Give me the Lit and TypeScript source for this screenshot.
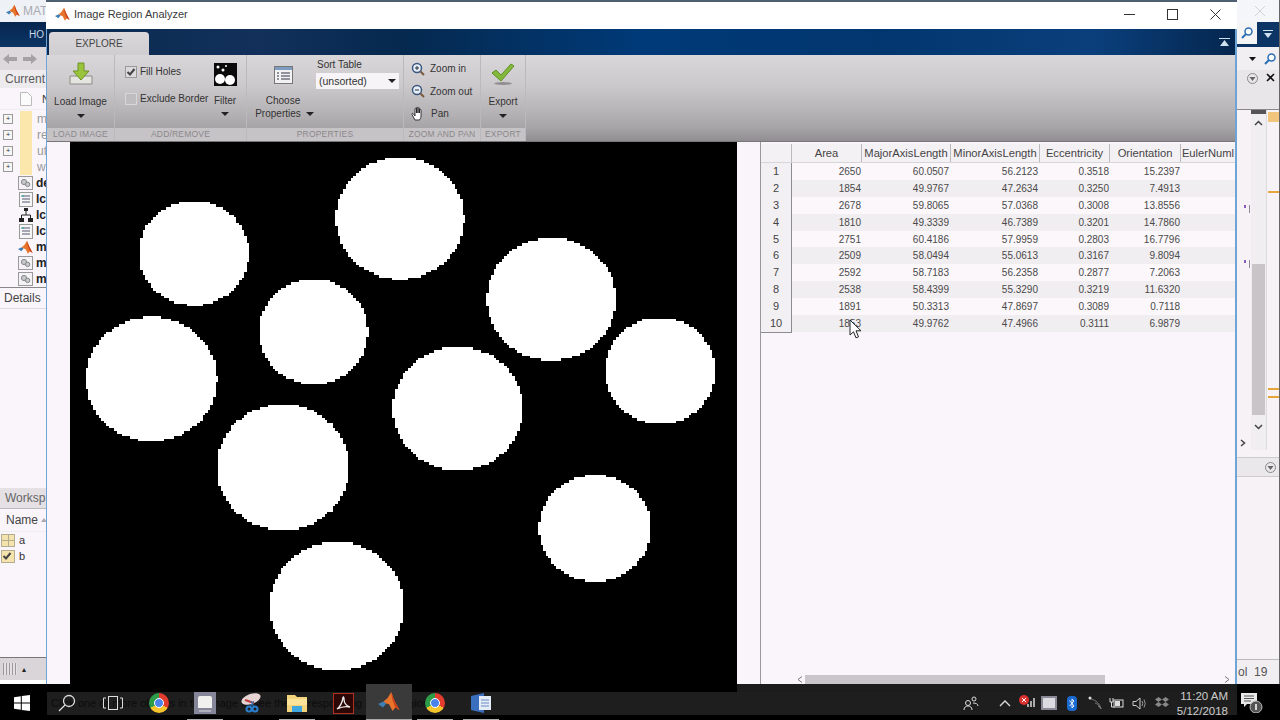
import { LitElement, html, css, svg } from "lit";
import { customElement } from "lit/decorators.js";

// x, y, rx, ry of the white regions in the binary image (relative to the image panel)
const blobs = [
  [124, 111, 55, 52],
  [330, 76, 64, 61],
  [481.5, 157, 64.5, 61],
  [243.5, 189.5, 54.5, 52.5],
  [81.5, 237, 65.5, 62],
  [590, 228.5, 55, 53],
  [388, 266.5, 65, 61.5],
  [213, 325, 66, 63],
  [525, 386, 56, 53],
  [267, 464, 67, 64],
];

// the source image is upscaled, so the edges show coarse pixels
const GRID = 2.6;
const blobPath = ([cx, cy, rx, ry]: number[]) => {
  let d = "";
  for (let j = Math.floor((cy - ry) / GRID); j * GRID < cy + ry; j++) {
    const t = (j * GRID + GRID / 2 - cy) / ry;
    if (Math.abs(t) >= 1) continue;
    const half = rx * Math.sqrt(1 - t * t);
    const x0 = (Math.round((cx - half) / GRID) * GRID).toFixed(1);
    const x1 = (Math.round((cx + half) / GRID) * GRID).toFixed(1);
    const y0 = (j * GRID).toFixed(1);
    const y1 = ((j + 1) * GRID + 0.4).toFixed(1);
    d += `M${x0} ${y0}H${x1}V${y1}H${x0}z`;
  }
  return d;
};

const rows = [
  ["2650", "60.0507", "56.2123", "0.3518", "15.2397"],
  ["1854", "49.9767", "47.2634", "0.3250", "7.4913"],
  ["2678", "59.8065", "57.0368", "0.3008", "13.8556"],
  ["1810", "49.3339", "46.7389", "0.3201", "14.7860"],
  ["2751", "60.4186", "57.9959", "0.2803", "16.7796"],
  ["2509", "58.0494", "55.0613", "0.3167", "9.8094"],
  ["2592", "58.7183", "56.2358", "0.2877", "7.2063"],
  ["2538", "58.4399", "55.3290", "0.3219", "11.6320"],
  ["1891", "50.3313", "47.8697", "0.3089", "0.7118"],
  ["1853", "49.9762", "47.4966", "0.3111", "6.9879"],
];

const headers = ["Area", "MajorAxisLength", "MinorAxisLength", "Eccentricity", "Orientation", "EulerNuml"];

const matlabLogo = (size: number) => html`<svg width=${size} height=${size} viewBox="0 0 16 16">
  <path d="M0 9.5 4 7.6 6 9 3.6 12z" fill="#3f7fb5" />
  <path d="M4 7.6 7 5 9.6.8 12 7l3.6 6.8-3-1.8-2 2.6L8 9.6 6 9z" fill="#e8732a" />
  <path d="M9.6.8 12 7l3.6 6.8-3-1.8L10.4 6z" fill="#c9401c" />
</svg>`;

const checkMark = html`<svg width="10" height="10" viewBox="0 0 10 10"><path d="M1.5 5 4 7.5 8.5 2" fill="none" stroke="#444" stroke-width="2" /></svg>`;

const caret = html`<svg class="caret" width="8" height="4" viewBox="0 0 8 4"><path d="M0 0h8L4 4z" fill="#222" /></svg>`;

const gearFile = html`<svg width="15" height="14" viewBox="0 0 15 14"><rect x=".5" y=".5" width="14" height="13" fill="#f4f2f4" stroke="#999" /><circle cx="6" cy="6" r="2.6" fill="#c4c8cc" stroke="#888" /><circle cx="9.6" cy="8.4" r="2.2" fill="#c4c8cc" stroke="#888" /></svg>`;
const docFile = html`<svg width="14" height="15" viewBox="0 0 14 15"><rect x=".5" y=".5" width="13" height="14" fill="#f6f6f6" stroke="#999" /><path d="M3 4h8M3 7h8M3 10h8" stroke="#557" /><path d="M2 4h3" stroke="#3a9" /></svg>`;
const treeFile = html`<svg width="14" height="15" viewBox="0 0 14 15"><path d="M7 2v5M2.500 11V7h9v4" stroke="#222" fill="none" /><rect x="5" y="0" width="4" height="3" fill="#222" /><rect x="0" y="10" width="5" height="4" fill="#222" /><rect x="9" y="10" width="5" height="4" fill="#222" /></svg>`;

const chrome = html`<span class="chrome"><span class="chrome-eye"></span></span>`;

@customElement("app-root")
export class AppRoot extends LitElement {
  static styles = css`
    :host {
      display: block;
      width: 1280px;
      height: 720px;
      overflow: hidden;
      position: relative;
      font-family: "Liberation Sans", Arial, sans-serif;
      color: #3a3a3a;
      background: #000;
    }
    svg { display: block; flex: none; }
    .desk { display: flex; height: 684px; }

    /* MATLAB behind, left */
    .back-left {
      width: 46px;
      display: flex;
      flex-direction: column;
      background: #faf5fb;
      flex: none;
      overflow: hidden;
    }
    .bl-title { height: 22px; display: flex; align-items: center; gap: 3px; padding-left: 6px; background: #eef1f6; color: #a9a9b2; font-size: 12px; }
    .bl-home { height: 25px; background: linear-gradient(#06264e, #0c3565); color: #c9d6e6; font-size: 10px; display: flex; align-items: center; padding-left: 29px; box-sizing: border-box; }
    .bl-nav { height: 23px; background: #dcd8dc; display: flex; align-items: center; gap: 6px; padding-left: 3px; }
    .bl-current { height: 18px; background: #eeebee; font-size: 12px; color: #5a5a5a; padding-left: 5px; line-height: 18px; }
    .bl-head { height: 22px; display: flex; align-items: center; padding-left: 20px; gap: 10px; font-size: 11px; border-bottom: 1px solid #eee; box-sizing: border-box; }
    .bl-list { padding-top: 1px; height: 178px; box-sizing: border-box; border-bottom: 1px solid #888; }
    .f-row { height: 16px; display: flex; align-items: center; font-size: 12px; color: #222; white-space: nowrap; }
    .f-row.dim { color: #999; }
    .f-row b { font-weight: 700; }
    .plus { width: 8px; height: 8px; margin-left: 3px; border: 1px solid #999; font-size: 8px; line-height: 7px; text-align: center; color: #444; flex: none; box-sizing: content-box; background: #f6f6f6; }
    .folder { width: 12px; height: 16px; background: #fbe6ac; margin: 0 5px 0 7px; flex: none; }
    .file-ic { width: 15px; margin: 0 3px 0 18px; flex: none; display: flex; justify-content: center; }
    .bl-details { height: 20px; font-size: 12px; padding-left: 4px; line-height: 20px; color: #444; }
    .bl-gap { height: 179px; border-top: 1px solid #ddd; }
    .bl-ws { height: 20px; background: #e4e0e4; border-bottom: 1px solid #bbb; font-size: 12px; color: #666; padding-left: 5px; line-height: 20px; }
    .bl-name { height: 22px; font-size: 12px; padding-left: 6px; line-height: 22px; color: #444; border-bottom: 1px solid #eee; display: flex; align-items: center; gap: 3px; }
    .bl-name i { width: 0; height: 0; border: 3px solid transparent; border-bottom: 4px solid #aaa; margin-top: -4px; }
    .w-row { height: 16px; display: flex; align-items: center; gap: 4px; font-size: 11px; color: #333; }
    .w-ic { width: 14px; height: 13px; background: #f4e3ad; border: 1px solid #b5ad90; box-sizing: border-box; margin-left: 1px; }
    .w-ic.grid { background: linear-gradient(#b5ad90, #b5ad90) 0 50% / 100% 1px no-repeat, linear-gradient(#b5ad90, #b5ad90) 50% 0 / 1px 100% no-repeat, #f4e3ad; }
    .bl-fill { flex: 1; }
    .bl-status { height: 22px; border-top: 1px solid #777; background: #d9d5d9; display: flex; align-items: center; font-size: 8px; color: #222; padding-left: 3px; gap: 5px; }
    .bl-bars { width: 14px; height: 12px; background: repeating-linear-gradient(90deg, #999 0 1px, #e4e0e4 1px 3px); }
    .bl-end { height: 4px; background: #fff; }

    /* analyzer window */
    .win {
      width: 1191px;
      flex: none;
      display: flex;
      flex-direction: column;
      box-sizing: border-box;
      border-left: 1px solid #6ea5d6;
      border-right: 2px solid #6ea5d6;
      background: #faf5fb;
    }
    .title { height: 29px; box-sizing: border-box; border-top: 2px solid #4d5f70; padding-bottom: 3px; margin: 0 -2px 0 -1px; background: #fff; display: flex; align-items: center; padding-left: 9px; gap: 4px; font-size: 11px; color: #3a3a3a; flex: none; }
    .title-fill { flex: 1; }
    .wc { width: 43px; display: flex; justify-content: center; margin-left: -4px; }
    .strip { height: 26px; background: linear-gradient(90deg, #0a2a4f, #12305a 18%, #05294f 30%, #003a78 50%, #02366f 70%, #0a3f7c 88%, #05274f); display: flex; justify-content: space-between; align-items: flex-end; padding-left: 2px; flex: none; }
    .tab { width: 100px; height: 23px; border-radius: 4px 4px 0 0; background: linear-gradient(#dbd8db, #d0cdd0); font-size: 10px; color: #444; text-align: center; line-height: 23px; }
    .collapse { align-self: center; margin-right: 5px; }
    .ribbon { height: 87px; display: flex; flex: none; background: linear-gradient(#dad7da 0%, #ccc9cc 35%, #b7b4b7 65%, #a7a4a7 85%, #908e90 100%); border-bottom: 1px solid #777; box-sizing: border-box; font-size: 10px; color: #333; }
    .sec { display: flex; flex-direction: column; border-right: 1px solid #bcb9bc; box-sizing: border-box; flex: none; }
    .sec-body { height: 73px; position: relative; display: flex; }
    .sec-foot { height: 13px; background: #c6c3c6; color: #8a888a; font-size: 8.5px; text-align: center; line-height: 13px; letter-spacing: .2px; white-space: nowrap; }
    .big { display: flex; flex-direction: column; align-items: center; flex: 1; padding-top: 7px; }
    .big .label { margin-top: 9px; line-height: 13px; text-align: center; }
    .big .caret { margin-top: 6px; }
    .s-load { width: 68px; }
    .s-add { width: 132px; }
    .s-add .checks { display: flex; flex-direction: column; gap: 14px; padding: 10px 0 0 10px; width: 88px; flex: none; }
    .check { display: flex; align-items: center; gap: 3px; white-space: nowrap; height: 13px; }
    .box { width: 10px; height: 10px; border: 1px solid #999; background: #dcdadc; box-sizing: content-box; flex: none; }
    .box.off { background: #bfbdbf; border-color: #d8d6d8; }
    .s-filter { width: 24px; flex: none; padding-top: 8px; }
    .s-filter .label { margin-top: 8px; }
    .s-filter .caret { margin-top: 5px; }
    .s-prop { width: 157px; }
    .s-prop .choose { width: 72px; flex: none; padding-top: 11px; display: flex; flex-direction: column; align-items: center; }
    .choose .label { margin-top: 10px; line-height: 13px; text-align: center; }
    .choose .pr { display: flex; align-items: center; gap: 5px; margin-left: 3px; }
    .sort { padding: 4px 0 0 0; margin-left: -2px; }
    .sort-label { line-height: 12px; }
    .drop { width: 83px; height: 16px; margin-top: 2px; margin-left: -1px; background: #f6f4f6; display: flex; align-items: center; justify-content: space-between; padding: 0 3px 0 3px; box-sizing: border-box; font-size: 10.5px; }
    .s-zoom { width: 77px; }
    .zoom-col { display: flex; flex-direction: column; padding: 6px 0 0 7px; gap: 7.5px; }
    .zi { display: flex; align-items: center; gap: 5px; height: 15px; white-space: nowrap; }
    .s-export { width: 45px; }
    .rib-fill { flex: 1; }

    .main { flex: 1; display: flex; min-height: 0; }
    .img-wrap { padding-left: 23px; width: 690px; flex: none; box-sizing: border-box; }
    .img { width: 667px; height: 548px; background: #000; }
    .pane { margin-left: 23px; flex: 1; display: flex; flex-direction: column; padding-top: 2px; border-left: 1px solid #999; min-width: 0; }
    .thead, .trow { display: grid; grid-template-columns: 31px 70px 89px 89px 70px 71px 1fr; }
    .thead { height: 19px; font-size: 11.2px; line-height: 19px; color: #444; background: #f4f1f4; border-bottom: 1px solid #d8d5d8; box-sizing: border-box; }
    .thead span { text-align: center; white-space: nowrap; overflow: hidden; border-right: 1px solid #bdbabd; }
    .thead span:last-child { border-right: none; }
    .trow { height: 16.9px; font-size: 10px; line-height: 17px; color: #4a4a4a; background: #fbf7fb; }
    .trow.alt { background: #f1eef1; }
    .trow .num { background: #f3f0f3; border: 1px solid #8b8b92; border-top: none; border-left: none; box-sizing: border-box; text-align: center; font-size: 11px; color: #444; }
    .trow .val { text-align: right; padding-right: 1px; }
    .trow .val:nth-child(3), .trow .val:nth-child(4) { padding-right: 2px; }
    .pane-fill { flex: 1; }
    .hscroll { height: 10px; position: relative; display: flex; align-items: center; }
    .thumb { margin-left: 50px; width: 300px; height: 9px; background: #c9c5c9; }
    .arrow-l { margin-left: 36px; margin-right: -48px; }
    .arrow-r { margin-left: auto; margin-right: 5px; }

    /* MATLAB behind, right */
    .back-right { width: 43px; flex: none; background: #f6f2f6; display: flex; flex-direction: column; border-right: 1px solid #666; box-sizing: border-box; }
    .br-title { height: 22px; background: #f4f6fa; display: flex; justify-content: center; align-items: center; padding-left: 4px; }
    .br-blue { height: 25px; background: #0c3565; display: flex; align-items: center; gap: 6px; }
    .br-sb { width: 20px; height: 22px; margin-top: -3px; background: #f4f4f4; display: flex; justify-content: center; align-items: center; }
    .br-row { height: 23px; background: #f2eff2; display: flex; align-items: center; justify-content: flex-end; gap: 8px; padding-right: 3px; }
    .br-row2 { height: 40px; background: #e9e6e9; display: flex; padding: 3px 4px 0 0; box-sizing: border-box; justify-content: flex-end; gap: 8px; border-bottom: 1px solid #888; }
    .br-editor { flex: none; height: 340px; display: flex; position: relative; }
    .br-gut { width: 14px; flex: none; position: relative; }
    .mark { position: absolute; left: 7px; width: 2px; height: 3px; background: #8a5cc0; }
    .mark::after { content: ""; position: absolute; left: 5px; top: 0; width: 1px; height: 8px; background: #8a8a9a; }
    .mark.m1 { top: 95px; }
    .mark.m2 { top: 150px; }
    .next { position: absolute; left: 3px; top: 329px; }
    .br-sc { width: 15px; flex: none; background: #f1eef1; display: flex; flex-direction: column; align-items: center; }
    .br-top { width: 15px; height: 4px; background: #555; flex: none; margin-bottom: 6px; }
    .br-thumb { width: 13px; height: 151px; background: #c8c4c8; margin-top: 138px; margin-bottom: 9px; }
    .br-side { flex: 1; border-left: 1px solid #ddd; position: relative; }
    .omark { position: absolute; left: 1px; right: 0; height: 2px; background: #e9a33b; }
    .omark.o1 { top: 81px; }
    .omark.o2 { top: 278px; }
    .omark.o3 { top: 286px; }
    .obox { position: absolute; left: 1px; top: 2px; right: 0; height: 10px; background: #f2c57c; }
    .br-bar { height: 18px; margin-top: 7px; background: #ebe8eb; border-top: 1px solid #ccc; border-bottom: 1px solid #ccc; display: flex; justify-content: flex-end; align-items: center; padding-right: 3px; }
    .br-fill { flex: 1; }
    .br-foot { height: 24px; background: #f1eef1; border-top: 1px solid #bbb; font-size: 12px; line-height: 24px; color: #555; padding-left: 1px; }

    /* windows taskbar, the status bar of the window shows through */
    .task { height: 36px; padding-top: 6px; box-sizing: border-box; display: flex; align-items: stretch; color: #ddd; position: relative; }
    .ghost { position: absolute; left: 47px; top: 8px; width: 1190px; height: 23px; background: #1e1e1e; color: #0c0c0c; font-size: 11px; line-height: 23px; padding-left: 4px; box-sizing: border-box; white-space: nowrap; }
    .ghost-top { position: absolute; left: 737px; top: 0; width: 500px; height: 8px; background: #1c1c1c; }
    .start { width: 44px; display: flex; justify-content: center; align-items: center; position: relative; height: 26px; }
    .slot { width: 46px; height: 26px; display: flex; justify-content: center; align-items: center; position: relative; flex: none; }
    .slot.run::after { content: ""; position: absolute; left: 5px; right: 5px; top: 29px; height: 1px; background: #aaa; }
    .slot.hot { background: #3a3a3a; height: 36px; margin-top: -6px; padding-top: 0; }
    .slot.hot::after { content: ""; position: absolute; left: 0; right: 0; bottom: 0; height: 1px; background: #aaa; }
    .chrome { width: 20px; height: 20px; border-radius: 50%; background: conic-gradient(#e33b2e 0 120deg, #f7c52b 120deg 240deg, #2d9c48 240deg 360deg); display: flex; align-items: center; justify-content: center; }
    .chrome-eye { width: 8px; height: 8px; border-radius: 50%; background: #4a84ea; border: 1.5px solid #fff; box-sizing: content-box; }
    .tray { margin-left: auto; display: flex; align-items: center; height: 26px; position: relative; }
    .ti { width: 22.5px; display: flex; justify-content: center; flex: none; }
    .ti.up { width: 21.5px; margin-left: 12px; }
    .clock { width: 55px; display: flex; flex-direction: column; align-items: flex-end; font-size: 11.5px; line-height: 15px; color: #ccc; padding-top: 1px; white-space: nowrap; }
    .notif { width: 43px; display: flex; justify-content: center; margin-left: 2.5px; margin-right: 6.5px; }
    .cursor { position: absolute; left: 849px; top: 319px; }
  `;

  render() {
    return html`
      <div class="desk">
        ${this.renderBackLeft()}
        <div class="win">
          <div class="title">
            ${matlabLogo(15)}<span>Image Region Analyzer</span><span class="title-fill"></span>
            <span class="wc"><svg width="11" height="11" viewBox="0 0 11 11"><path d="M0 5.500h11" stroke="#333" /></svg></span>
            <span class="wc"><svg width="11" height="11" viewBox="0 0 11 11"><rect x=".5" y=".5" width="10" height="10" fill="none" stroke="#333" /></svg></span>
            <span class="wc"><svg width="11" height="11" viewBox="0 0 11 11"><path d="M.5.500l10 10M10.500.500l-10 10" stroke="#333" /></svg></span>
          </div>
          <div class="strip">
            <div class="tab">EXPLORE</div>
            <svg class="collapse" width="11" height="9" viewBox="0 0 11 9"><path d="M0 .5h11" stroke="#cfe0ef" /><path d="M5.500 2 10 8H1z" fill="#cfe0ef" /></svg>
          </div>
          ${this.renderRibbon()}
          <div class="main">
            <div class="img-wrap">
              <svg class="img" viewBox="0 0 667 548" shape-rendering="crispEdges">
                ${blobs.map((b) => svg`<path d=${blobPath(b)} fill="#fff" />`)}
              </svg>
            </div>
            <div class="pane">
              <div class="thead">
                <span></span>${headers.map((h) => html`<span>${h}</span>`)}
              </div>
              ${rows.map(
                (r, i) => html`<div class="trow ${i % 2 ? "alt" : ""}">
                  <span class="num">${i + 1}</span>
                  ${r.map((v) => html`<span class="val">${v}</span>`)}
                </div>`
              )}
              <div class="pane-fill"></div>
              <div class="hscroll">
                <svg class="arrow-l" width="6" height="7" viewBox="0 0 6 7"><path d="M5 .5 1 3.500l4 3" fill="none" stroke="#777" /></svg>
                <div class="thumb"></div>
                <svg class="arrow-r" width="6" height="7" viewBox="0 0 6 7"><path d="M1 .5 5 3.500l-4 3" fill="none" stroke="#777" /></svg>
              </div>
            </div>
          </div>
        </div>
        ${this.renderBackRight()}
      </div>
      ${this.renderTaskbar()}
      <svg class="cursor" width="13" height="20" viewBox="0 0 13 20"><path d="M1 1v15l3.500-3.200 2.500 6 2.500-1-2.500-6H12z" fill="#fff" stroke="#222" /></svg>
    `;
  }

  renderBackLeft() {
    const folders = ["m", "re", "ut", "w"];
    const files = [
      [gearFile, "de"],
      [docFile, "lc"],
      [treeFile, "lc"],
      [docFile, "lc"],
      [matlabLogo(15), "m"],
      [gearFile, "m"],
      [gearFile, "m"],
    ];
    return html`<div class="back-left">
      <div class="bl-title">${matlabLogo(14)}<span>MATL</span></div>
      <div class="bl-home">HO</div>
      <div class="bl-nav">
        <svg width="14" height="10" viewBox="0 0 14 10"><path d="M0 5l6-5v3h8v4H6v3z" fill="#a5a2a5" /></svg>
        <svg width="14" height="10" viewBox="0 0 14 10"><path d="M14 5L8 0v3H0v4h8v3z" fill="#a5a2a5" /></svg>
      </div>
      <div class="bl-current">Current</div>
      <div class="bl-head">
        <svg width="12" height="14" viewBox="0 0 12 14"><path d="M.5.5h7l4 4v9H.5z" fill="#fbfbfb" stroke="#bbb" /></svg><span>N</span>
      </div>
      <div class="bl-list">
        ${folders.map(
          (f) => html`<div class="f-row dim"><span class="plus">+</span><span class="folder"></span>${f}</div>`
        )}
        ${files.map(
          ([ic, name]) => html`<div class="f-row"><span class="file-ic">${ic}</span><b>${name}</b></div>`
        )}
      </div>
      <div class="bl-details">Details</div>
      <div class="bl-gap"></div>
      <div class="bl-ws">Workspa</div>
      <div class="bl-name">Name<i></i></div>
      <div class="w-row"><span class="w-ic grid"></span>a</div>
      <div class="w-row"><span class="w-ic">${checkMark}</span>b</div>
      <div class="bl-fill"></div>
      <div class="bl-status"><span class="bl-bars"></span>▴</div>
      <div class="bl-end"></div>
    </div>`;
  }

  renderRibbon() {
    return html`<div class="ribbon">
      <div class="sec s-load">
        <div class="sec-body">
          <div class="big">
            <svg width="24" height="24" viewBox="0 0 24 24">
              <path d="M1 14h22v8H1z" fill="#e4e4e0" stroke="#8c8c86" />
              <path d="M9 1h6v8h5l-8 9-8-9h5z" fill="#9ac43c" stroke="#6f9128" />
            </svg>
            <span class="label">Load Image</span>${caret}
          </div>
        </div>
        <div class="sec-foot">LOAD IMAGE</div>
      </div>
      <div class="sec s-add">
        <div class="sec-body">
          <div class="checks">
            <div class="check"><span class="box">${checkMark}</span>Fill Holes</div>
            <div class="check"><span class="box off"></span>Exclude Border</div>
          </div>
          <div class="big s-filter">
            <svg width="23" height="23" viewBox="0 0 23 23">
              <rect width="23" height="23" fill="#0a0a0a" />
              <circle cx="6" cy="16" r="5" fill="#fff" /><circle cx="16" cy="17" r="5" fill="#fff" />
              <circle cx="4" cy="4" r="1.500" fill="#fff" /><circle cx="9" cy="7" r="1.500" fill="#fff" /><circle cx="12" cy="3" r="1" fill="#fff" />
            </svg>
            <span class="label">Filter</span>${caret}
          </div>
        </div>
        <div class="sec-foot">ADD/REMOVE</div>
      </div>
      <div class="sec s-prop">
        <div class="sec-body">
          <div class="choose">
            <svg width="19" height="18" viewBox="0 0 19 18">
              <rect x=".5" y=".5" width="18" height="17" fill="#f2f2f4" stroke="#777" />
              <rect x="1" y="1" width="17" height="3" fill="#7d9cc0" />
              <path d="M3 7h2M7 7h9M3 10h2M7 10h9M3 13h2M7 13h9" stroke="#334" />
            </svg>
            <span class="label">Choose<br /><span class="pr">Properties ${caret}</span></span>
          </div>
          <div class="sort">
            <div class="sort-label">Sort Table</div>
            <div class="drop">(unsorted)${caret}</div>
          </div>
        </div>
        <div class="sec-foot">PROPERTIES</div>
      </div>
      <div class="sec s-zoom">
        <div class="sec-body">
          <div class="zoom-col">
            <div class="zi">
              <svg width="14" height="14" viewBox="0 0 14 14"><circle cx="6" cy="6" r="4.500" fill="#e8eef6" stroke="#39577f" stroke-width="1.500" /><path d="M9.500 9.500 13 13" stroke="#7a5a3a" stroke-width="2" /><path d="M4 6h4M6 4v4" stroke="#234" /></svg>
              Zoom in
            </div>
            <div class="zi">
              <svg width="14" height="14" viewBox="0 0 14 14"><circle cx="6" cy="6" r="4.500" fill="#e8eef6" stroke="#39577f" stroke-width="1.500" /><path d="M9.500 9.500 13 13" stroke="#7a5a3a" stroke-width="2" /><path d="M4 6h4" stroke="#234" /></svg>
              Zoom out
            </div>
            <div class="zi">
              <svg width="15" height="15" viewBox="0 0 15 15"><path d="M4 14 1 8.500c-.5-1 1-1.500 1.500-.5L4 10V3c0-1 1.500-1 1.500 0v4-5c0-1 1.500-1 1.500 0v5-4.500c0-1 1.500-1 1.500 0V7V4c0-1 1.500-1 1.500 0v6c0 2-1 3-1.500 4z" fill="#fff" stroke="#222" stroke-width=".9" /></svg>
              Pan
            </div>
          </div>
        </div>
        <div class="sec-foot">ZOOM AND PAN</div>
      </div>
      <div class="sec s-export">
        <div class="sec-body">
          <div class="big">
            <svg width="24" height="24" viewBox="0 0 24 24"><ellipse cx="12" cy="21.500" rx="9" ry="1.500" fill="#8f8d8f" /><path d="M1 11l4-3 5 5L20 2l3 2-13 15z" fill="#83b93a" stroke="#5f8f24" /></svg>
            <span class="label">Export</span>${caret}
          </div>
        </div>
        <div class="sec-foot">EXPORT</div>
      </div>
      <div class="rib-fill"></div>
    </div>`;
  }

  renderBackRight() {
    return html`<div class="back-right">
      <div class="br-title"><svg width="10" height="10" viewBox="0 0 10 10"><path d="M0 0l10 10M10 0 0 10" stroke="#cfd3da" /></svg></div>
      <div class="br-blue">
        <div class="br-sb"><svg width="12" height="12" viewBox="0 0 12 12"><circle cx="7.500" cy="4.500" r="3.500" fill="#fff" stroke="#2a6fb5" stroke-width="1.500" /><path d="M5 7 1 11" stroke="#2a6fb5" stroke-width="2" /></svg></div>
        <svg width="10" height="9" viewBox="0 0 10 9"><path d="M0 .5h10" stroke="#cfe0ef" /><path d="M1 3h8L5 8z" fill="#cfe0ef" /></svg>
      </div>
      <div class="br-row">
        <svg width="7" height="4" viewBox="0 0 7 4"><path d="M0 0h7L3.500 4z" fill="#111" /></svg>
        <svg width="12" height="12" viewBox="0 0 12 12"><circle cx="7.500" cy="4.500" r="3.500" fill="#fff" stroke="#2a6fb5" stroke-width="1.500" /><path d="M5 7 1 11" stroke="#2a6fb5" stroke-width="2" /></svg>
      </div>
      <div class="br-row2">
        <svg width="11" height="11" viewBox="0 0 11 11"><circle cx="5.500" cy="5.500" r="5" fill="none" stroke="#888" /><path d="M2.500 4h6l-3 4z" fill="#666" /></svg>
        <svg width="9" height="9" viewBox="0 0 9 9"><path d="M1 1l7 7M8 1 1 8" stroke="#111" stroke-width="1.600" /></svg>
      </div>
      <div class="br-editor">
        <div class="br-gut">
          <span class="mark m1"></span>
          <span class="mark m2"></span>
          <svg class="next" width="6" height="8" viewBox="0 0 6 8"><path d="M1 1l3.500 3L1 7" fill="none" stroke="#444" stroke-width="1.500" /></svg>
        </div>
        <div class="br-sc">
          <div class="br-top"></div>
          <svg width="9" height="6" viewBox="0 0 9 6"><path d="M1 5l3.500-3.500L8 5" fill="none" stroke="#444" stroke-width="1.500" /></svg>
          <div class="br-thumb"></div>
          <svg width="9" height="6" viewBox="0 0 9 6"><path d="M1 1l3.500 3.500L8 1" fill="none" stroke="#444" stroke-width="1.500" /></svg>
        </div>
        <div class="br-side">
          <span class="obox"></span>
          <span class="omark o1"></span>
          <span class="omark o2"></span>
          <span class="omark o3"></span>
        </div>
      </div>
      <div class="br-bar"><svg width="11" height="11" viewBox="0 0 11 11"><circle cx="5.500" cy="5.500" r="5" fill="none" stroke="#888" /><path d="M2.500 4h6l-3 4z" fill="#666" /></svg></div>
      <div class="br-fill"></div>
      <div class="br-foot">ol&nbsp; 19</div>
    </div>`;
  }

  renderTaskbar() {
    return html`<div class="task">
      <div class="ghost-top"></div>
      <div class="ghost">Click one or more objects in the image to see the corresponding image region.</div>
      <div class="start">
        <svg width="16" height="16" viewBox="0 0 16 16"><path d="M0 2.200 6.800 1.200v6.300H0zM7.800 1 16 0v7.500H7.800zM0 8.500h6.800v6.300L0 13.800zM7.800 8.500H16V16l-8.200-1.100z" fill="#fff" /></svg>
      </div>
      <div class="slot"><svg width="18" height="18" viewBox="0 0 18 18"><circle cx="11" cy="7" r="5.500" fill="none" stroke="#ddd" stroke-width="1.300" /><path d="M7 11 1 17" stroke="#ddd" stroke-width="1.300" /></svg></div>
      <div class="slot"><svg width="20" height="14" viewBox="0 0 20 14"><rect x="5.500" y=".5" width="9" height="13" fill="none" stroke="#ddd" /><path d="M3 2H.5v10H3M17 2h2.500v10H17" fill="none" stroke="#ddd" /></svg></div>
      <div class="slot">${chrome}</div>
      <div class="slot run"><svg width="22" height="22" viewBox="0 0 22 22"><rect width="22" height="22" fill="#86869a" /><path d="M4 6q0-2 2-2h10q2 0 2 2v10H4z" fill="#f0f0ee" /><path d="M5 19h12" stroke="#ddd" /></svg></div>
      <div class="slot"><svg width="22" height="20" viewBox="0 0 22 20"><ellipse cx="11" cy="6" rx="10" ry="5" fill="#e6d4d4" transform="rotate(-20 11 6)" /><path d="M5 7l9 3" stroke="#c03a3a" stroke-width="2" /><circle cx="9" cy="16" r="2.500" fill="none" stroke="#2a80d0" stroke-width="2" /><circle cx="15" cy="16" r="2.500" fill="none" stroke="#2a80d0" stroke-width="2" /><path d="M10 14l4-6M14 14 11 8" stroke="#2a80d0" /></svg></div>
      <div class="slot run"><svg width="20" height="18" viewBox="0 0 20 18"><path d="M0 1h8l2 2h10v15H0z" fill="#f4d47a" /><rect x="0" y="5" width="20" height="6" fill="#fbe39a" /><rect x="5" y="12" width="10" height="6" fill="#3fa8e0" /></svg></div>
      <div class="slot"><svg width="21" height="21" viewBox="0 0 21 21"><rect x=".5" y=".5" width="20" height="20" fill="#2b0806" stroke="#b03020" /><path d="M4 16c3-2 5-6 6-11 0-2 1-1 1 1 0 4 3 7 6 8-4-1-9 0-13 2z" fill="none" stroke="#eee" stroke-width="1.300" /></svg></div>
      <div class="slot hot">${matlabLogo(22)}</div>
      <div class="slot run">${chrome}</div>
      <div class="slot run"><svg width="22" height="20" viewBox="0 0 22 20"><path d="M1 3l13-3v20L1 17z" fill="#3a6fc0" /><rect x="9" y="3" width="12" height="14" fill="#e4ecf8" /><path d="M11 7h8M11 10h8M11 13h8" stroke="#6a8cc0" /></svg></div>
      <div class="tray">
        <span class="ti"><svg width="16" height="15" viewBox="0 0 16 15"><circle cx="5" cy="7" r="2.500" fill="none" stroke="#ddd" /><path d="M1 14c0-3 2-4 4-4s4 1 4 4" fill="none" stroke="#ddd" /><circle cx="11" cy="3" r="2" fill="none" stroke="#ddd" /><path d="M10 7c3 0 5 1 5 3" fill="none" stroke="#ddd" /></svg></span>
        <span class="ti up"><svg width="12" height="7" viewBox="0 0 12 7"><path d="M1 6l5-5 5 5" fill="none" stroke="#ddd" stroke-width="1.300" /></svg></span>
        <span class="ti"><svg width="16" height="16" viewBox="0 0 16 16"><path d="M8 12h2V9H8zM11 12h2V6h-2zM14 12h2V3h-2z" fill="#aaa" /><circle cx="5" cy="5" r="5" fill="#d93030" /><path d="M3 3l4 4M7 3 3 7" stroke="#fff" /></svg></span>
        <span class="ti"><svg width="16" height="14" viewBox="0 0 16 14"><rect width="16" height="14" fill="#8a8a96" /><rect x="2" y="2" width="12" height="10" fill="#dcdce0" /></svg></span>
        <span class="ti"><svg width="10" height="15" viewBox="0 0 10 15"><rect width="10" height="15" rx="4" fill="#1a6ad0" /><path d="M2.500 4.500 7 10 5 12V3l2 2-4.500 5" fill="none" stroke="#fff" stroke-width=".9" /></svg></span>
        <span class="ti"><svg width="15" height="14" viewBox="0 0 15 14"><path d="M14 13C13 8 9 4 4 3M14 13c-1-3-3-5-6-6M14 13c-.5-1-1.500-2-3-3" fill="none" stroke="#777" /><circle cx="3" cy="2" r="1.500" fill="#ddd" /></svg></span>
        <span class="ti"><svg width="15" height="12" viewBox="0 0 15 12"><rect x="5" y="3" width="9" height="7" fill="none" stroke="#ddd" /><rect x="6" y="4" width="5" height="5" fill="#ddd" /><path d="M1 1v4h3V1M2.500 5v5h3" fill="none" stroke="#ddd" /></svg></span>
        <span class="ti"><svg width="15" height="13" viewBox="0 0 15 13"><path d="M1 4.500h3L8 1v11L4 8.500H1z" fill="none" stroke="#ccc" /><path d="M10 4q1.500 2.500 0 5M12 2.500q2.500 4 0 8" fill="none" stroke="#999" /></svg></span>
        <span class="ti"><svg width="14" height="12" viewBox="0 0 14 12"><path d="M3.500 0 7 2.500 3.500 5 0 2.500zM10.500 0 14 2.500 10.500 5 7 2.500zM3.500 5 7 7.500 3.500 10 0 7.500zM10.500 5 14 7.500 10.500 10 7 7.500z" fill="#888" /></svg></span>
        <span class="clock"><span>11:20 AM</span><span>5/12/2018</span></span>
        <span class="notif"><svg width="22" height="20" viewBox="0 0 22 20"><path d="M0 0h16v11H6l-3 3v-3H0z" fill="#e8e8e8" /><path d="M3 3h10M3 5.500h10M3 8h7" stroke="#555" /><circle cx="15" cy="14" r="6" fill="#555" stroke="#bbb" /><path d="M15 11v6" stroke="#fff" stroke-width="1.500" /></svg></span>
      </div>
    </div>`;
  }
}
